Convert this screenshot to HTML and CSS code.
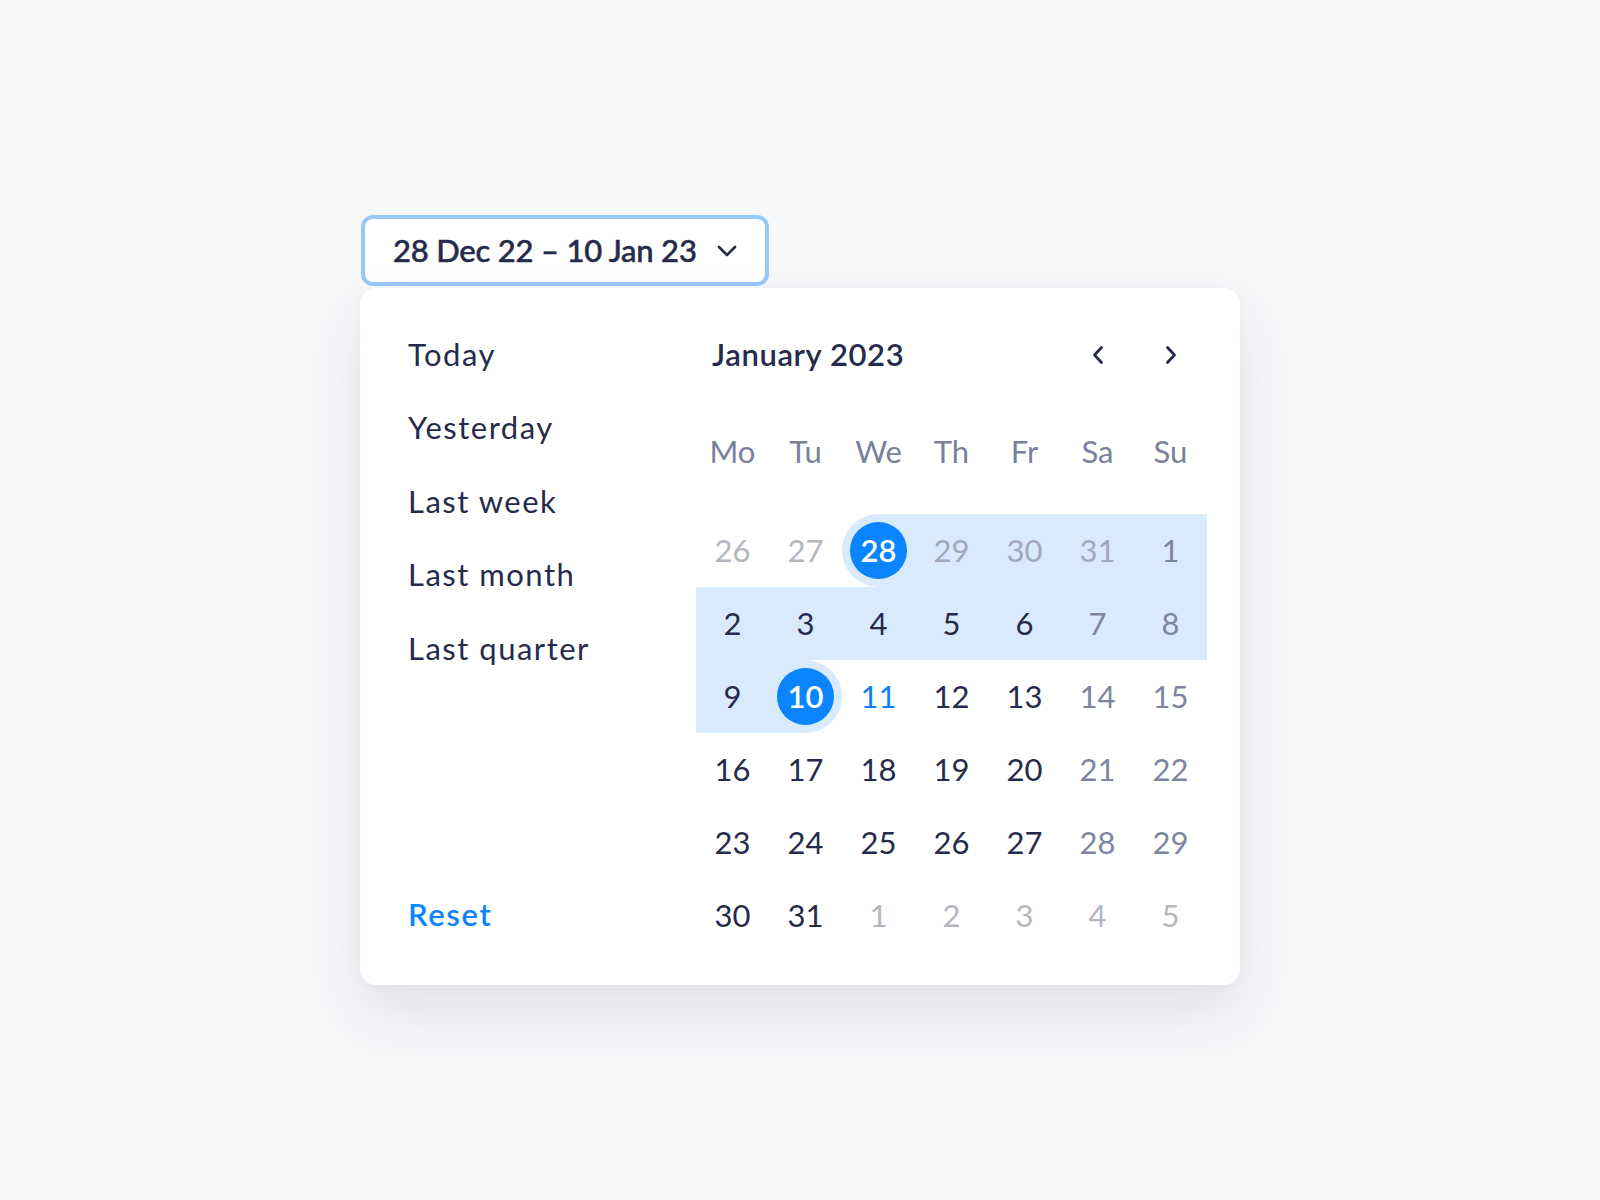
FILE: index.html
```html
<!DOCTYPE html>
<html lang="en">
<head>
<meta charset="utf-8">
<title>Date range picker</title>
<link rel="stylesheet" href="styles.css">
</head>
<body>
<div class="picker">
  <button class="trigger" type="button">
    <span class="trigger-label">28 Dec 22 – 10 Jan 23</span>
    <svg class="trigger-chevron" width="20" height="12" viewBox="0 0 20 12" aria-hidden="true"><path d="M2 2 L10 10 L18 2" fill="none" stroke="#262B4B" stroke-width="2.6" stroke-linecap="round" stroke-linejoin="round"/></svg>
  </button>
  <div class="card">
    <aside class="presets">
      <div class="preset">Today</div>
      <div class="preset">Yesterday</div>
      <div class="preset">Last week</div>
      <div class="preset">Last month</div>
      <div class="preset">Last quarter</div>
      <div class="reset">Reset</div>
    </aside>
    <section class="calendar">
      <header class="cal-head">
        <div class="month">January 2023</div>
        <div class="nav">
          <span class="nav-btn"><svg width="14" height="20" viewBox="0 0 14 20" aria-hidden="true"><path d="M10.5 2.5 L3.5 10 L10.5 17.5" fill="none" stroke="#262B4B" stroke-width="2.8" stroke-linecap="round" stroke-linejoin="round"/></svg></span>
          <span class="nav-btn"><svg width="14" height="20" viewBox="0 0 14 20" aria-hidden="true"><path d="M3.5 2.5 L10.5 10 L3.5 17.5" fill="none" stroke="#262B4B" stroke-width="2.8" stroke-linecap="round" stroke-linejoin="round"/></svg></span>
        </div>
      </header>
      <div class="weekdays">
        <span>Mo</span><span>Tu</span><span>We</span><span>Th</span><span>Fr</span><span>Sa</span><span>Su</span>
      </div>
      <div class="days">
        <span class="day out">26</span>
        <span class="day out">27</span>
        <span class="day start"><span class="dot">28</span></span>
        <span class="day in out-in">29</span>
        <span class="day in out-in">30</span>
        <span class="day in out-in">31</span>
        <span class="day in wk">1</span>

        <span class="day in">2</span>
        <span class="day in">3</span>
        <span class="day in">4</span>
        <span class="day in">5</span>
        <span class="day in">6</span>
        <span class="day in wk">7</span>
        <span class="day in wk">8</span>

        <span class="day in">9</span>
        <span class="day end"><span class="dot">10</span></span>
        <span class="day today">11</span>
        <span class="day">12</span>
        <span class="day">13</span>
        <span class="day wk">14</span>
        <span class="day wk">15</span>

        <span class="day">16</span>
        <span class="day">17</span>
        <span class="day">18</span>
        <span class="day">19</span>
        <span class="day">20</span>
        <span class="day wk">21</span>
        <span class="day wk">22</span>

        <span class="day">23</span>
        <span class="day">24</span>
        <span class="day">25</span>
        <span class="day">26</span>
        <span class="day">27</span>
        <span class="day wk">28</span>
        <span class="day wk">29</span>

        <span class="day">30</span>
        <span class="day">31</span>
        <span class="day out">1</span>
        <span class="day out">2</span>
        <span class="day out">3</span>
        <span class="day out">4</span>
        <span class="day out">5</span>
      </div>
    </section>
  </div>
</div>
</body>
</html>
```

FILE: styles.css
```css
* { box-sizing: border-box; }

html, body {
  margin: 0;
  height: 100%;
}

body {
  background: #F7F8FA;
  font-family: "Lato", "Open Sans", sans-serif;
  color: #262B4B;
  display: flex;
  align-items: center;
  justify-content: center;
  min-height: 1200px;
}

.picker {
  width: 880px;
  display: flex;
  flex-direction: column;
  align-items: flex-start;
  gap: 2px;
  margin-top: -1px;
}

.trigger {
  height: 71px;
  width: 408px;
  margin-left: 1px;
  padding: 0 0 0 28px;
  border: 4px solid #96C8FB;
  border-radius: 12px;
  background: #FFFFFF;
  display: flex;
  align-items: center;
  justify-content: flex-start;
  gap: 20px;
  font-family: inherit;
  color: #262B4B;
  cursor: pointer;
}

.trigger-label {
  font-size: 31px;
  font-weight: 500;
  letter-spacing: -0.2px;
  -webkit-text-stroke: 0.5px #262B4B;
}

.trigger-chevron {
  display: block;
  margin-top: 2px;
}

.card {
  width: 880px;
  height: 697px;
  background: #FFFFFF;
  border-radius: 16px;
  box-shadow: 0 28px 60px rgba(40, 48, 80, 0.11), 0 2px 8px rgba(40, 48, 80, 0.03);
  display: flex;
  padding: 46px 32px 33px 48px;
}

.presets {
  width: 288px;
  display: flex;
  flex-direction: column;
  gap: 33.5px;
}

.preset {
  font-size: 31px;
  line-height: 40px;
  height: 40px;
  letter-spacing: 1.5px;
}

.reset {
  margin-top: auto;
  font-size: 31px;
  line-height: 40px;
  font-weight: 600;
  letter-spacing: 1.6px;
  color: #0A84FF;
  margin-bottom: 18px;
}

.calendar {
  width: 512px;
  display: flex;
  flex-direction: column;
}

.cal-head {
  height: 40px;
  display: flex;
  align-items: center;
  justify-content: space-between;
}

.month {
  padding-left: 16px;
  font-size: 31px;
  line-height: 40px;
  font-weight: 600;
  letter-spacing: 0.6px;
}

.nav {
  display: flex;
  margin-right: 1px;
}

.nav-btn {
  width: 73px;
  height: 40px;
  display: flex;
  align-items: center;
  justify-content: center;
  padding-top: 3px;
}

.weekdays {
  margin-top: 57px;
  display: grid;
  grid-template-columns: repeat(7, 73px);
  font-size: 31px;
  line-height: 40px;
  color: #7A809B;
  text-align: center;
}

.days {
  margin-top: 43px;
  display: grid;
  grid-template-columns: repeat(7, 73px);
  grid-auto-rows: 73px;
}

.day {
  display: flex;
  align-items: center;
  justify-content: center;
  font-size: 31px;
  color: #262B4B;
}

.day.in { background: #DAEAFD; }
.day.wk { color: #7E859F; }
.day.out { color: #B4B6C0; }
.day.out-in { color: #A1A8BB; }
.day.today { color: #0A7EFF; }

.day.start {
  background: linear-gradient(90deg, transparent 50%, #DAEAFD 50%);
}

.day.end {
  background: linear-gradient(90deg, #DAEAFD 50%, transparent 50%);
}

.dot {
  width: 57px;
  height: 57px;
  border-radius: 50%;
  background: #0A84FF;
  color: #FFFFFF;
  font-weight: 600;
  display: flex;
  align-items: center;
  justify-content: center;
  box-shadow: 0 0 0 8px #DAEAFD;
}
```
